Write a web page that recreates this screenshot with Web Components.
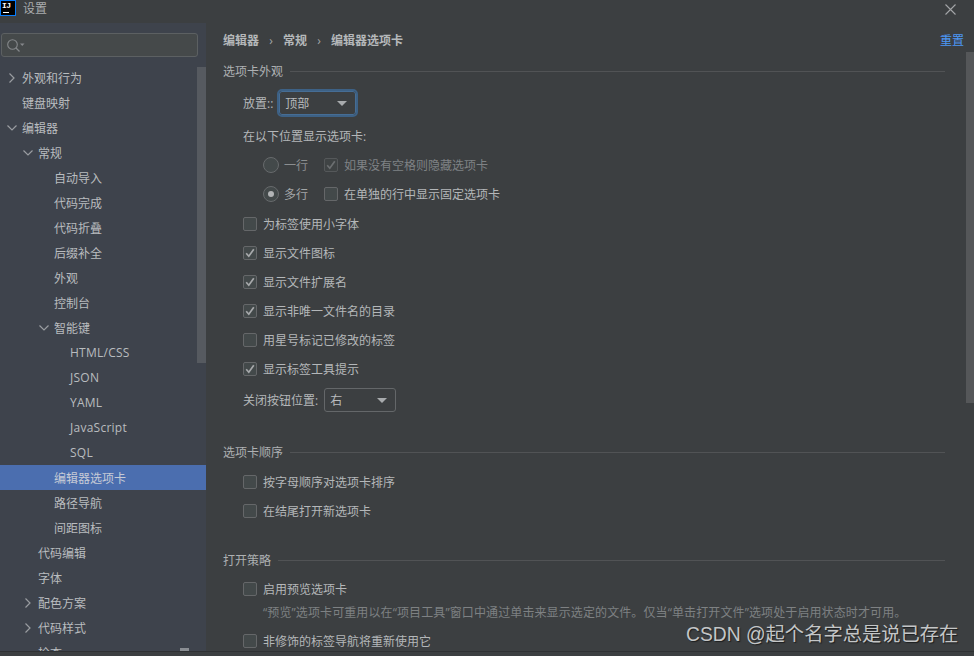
<!DOCTYPE html>
<html lang="zh"><head><meta charset="utf-8"><title>设置</title>
<style>
html,body{margin:0;padding:0;background:#3c3f41}
body{width:974px;height:656px;overflow:hidden;font:12px "Open Sans","Noto Sans CJK SC",sans-serif;color:#b4b7b9}
</style></head><body>
<settings-app></settings-app>
<script>
const FONT='"Open Sans","Noto Sans CJK SC",sans-serif';
function def(name,css,html,init){
  customElements.define(name,class extends HTMLElement{
    constructor(){super();const r=this.attachShadow({mode:'open'});r.innerHTML='<style>'+css+'</style>'+(typeof html==='function'?html(this):html);}
    connectedCallback(){if(init)init(this,this.shadowRoot)}
  });
}
const CHEV_R='<svg width="10" height="12" viewBox="0 0 10 12"><path d="M2.5 1.5 7 6 2.5 10.500" fill="none" stroke="#9a9da1" stroke-width="1.200"/></svg>';
const CHEV_D='<svg width="12" height="10" viewBox="0 0 12 10"><path d="M1.500 2.500 6 7l4.500-4.500" fill="none" stroke="#9a9da1" stroke-width="1.200"/></svg>';

def('tree-row',`:host{display:flex;align-items:center;height:25px;flex:none;font-size:12px;color:#b9bcbf;white-space:nowrap;box-sizing:border-box;padding-left:calc(var(--d,0)*16px + 22px);position:relative}
:host([sel]){background:#4b6eaf;color:#c6cbd6}
:host([latin]){letter-spacing:.25px}
.a{position:absolute;left:calc(var(--d,0)*16px + 6px);top:7px;width:12px;height:12px;display:flex;align-items:center;justify-content:center}`,
 h=>{const o=h.getAttribute('open');const ic=o==='1'?CHEV_D:o==='0'?CHEV_R:'';return `<span class="a">${ic}</span><slot></slot>`;},
 h=>{h.style.setProperty('--d',h.getAttribute('d')||0)});

def('search-box',`:host{display:flex;align-items:center;height:24px;box-sizing:border-box;margin:10px 8px 0 1px;width:197px;background:#45494a;border:1px solid #5c6062;border-radius:3px;padding-left:4px}`,
 `<svg width="20" height="15" viewBox="0 0 20 15"><circle cx="6.500" cy="6.500" r="4.800" fill="none" stroke="#85888b" stroke-width="1.100"/><path d="M10 10l3.500 3.500" stroke="#85888b" stroke-width="1.300"/><path d="M14 5.500h4.500L16.250 8z" fill="#85888b"/></svg>`);

def('side-bar',`:host{display:block;width:206px;flex:none;height:100%;background:#3e434c;position:relative;overflow:hidden}
.tree{margin-top:8px;display:flex;flex-direction:column}
.thumb{position:absolute;left:197px;top:44px;width:9px;height:296px;background:#565a60}
.mini{position:absolute;left:180px;top:625px;width:9px;height:3px;background:#8a8e93}`,
 `<search-box></search-box><div class="tree"><slot></slot></div><div class="thumb"></div><div class="mini"></div>`);

def('title-bar',`:host{display:flex;align-items:flex-start;height:23px;flex:none;background:#3c3f41;position:relative;font-size:12px;color:#a9acae}
.logo{width:16px;height:16px;margin:0 7px 0 0;box-sizing:border-box;background:#000;border:1px solid #087cfa;position:relative;flex:none;color:#fff;font:bold 8px/10px "Liberation Mono",monospace;padding-left:1px;letter-spacing:-.5px}
.logo i{position:absolute;left:2px;bottom:2px;width:6px;height:1px;background:#fff}
.t{line-height:18px}
.x{margin:4px 18px 0 auto;display:flex}`,
 `<div class="logo">IJ<i></i></div><span class="t"><slot></slot></span><span class="x"><svg width="11" height="11" viewBox="0 0 11 11"><path d="M.5.500l10 10M10.500.500l-10 10" stroke="#a4a6a8" stroke-width="1.100"/></svg></span>`);

def('bread-crumbs',`:host{display:flex;flex:none;align-items:center;height:20px;margin:7px 10px 0 17px;font-size:12px;font-weight:700;color:#b5b8ba}
::slotted(span){display:inline-block}
::slotted(.sep){width:24px;text-align:center;font-weight:400;color:#a2a5a7}
::slotted(a){margin-left:auto;color:#4c97f5;font-weight:400}`,`<slot></slot>`);

def('group-title',`:host{display:flex;flex:none;align-items:center;height:20px;margin-left:17px;margin-right:29px;font-size:12px;color:#adb0b2;white-space:nowrap}
i{flex:1;height:1px;background:#515355;margin-left:7px}`,`<slot></slot><i></i>`);

def('check-box',`:host{display:flex;flex:none;align-items:center;height:29px;padding-left:37px;font-size:12px;color:#b4b7b9;white-space:nowrap}
:host([sub]){height:auto;padding:0}
:host([dim]){color:#7f8285}
b{width:14px;height:14px;box-sizing:border-box;border:1px solid #656769;border-radius:2px;background:#43494a;margin-right:6px;display:flex;align-items:center;justify-content:center;flex:none}
svg{display:none}
:host([on]) svg{display:block}
:host([dim]) path{stroke:#6c6f71}
:host([dim]) b{border-color:#55585a;background:#3f4344}`,
 `<b><svg width="12" height="12" viewBox="0 0 12 12"><path d="M2.200 6.300 4.800 9.200 9.800 2.200" fill="none" stroke="#a7a9ab" stroke-width="1.700"/></svg></b><slot></slot>`);

def('radio-btn',`:host{display:flex;align-items:center;font-size:12px;color:#a3a6a8;white-space:nowrap;width:61px;flex:none}
b{width:16px;height:16px;box-sizing:border-box;border:1px solid #676a6c;border-radius:50%;background:#43494a;margin-right:5px;display:flex;align-items:center;justify-content:center}
:host([dim]){color:#8b8e90}
i{display:none;width:6px;height:6px;border-radius:50%;background:#b2b4b6}
:host([on]) i{display:block}`,`<b><i></i></b><slot></slot>`);

def('combo-box',`:host{display:flex;align-items:center;box-sizing:border-box;height:24px;border:1px solid #646769;border-radius:3px;background:#3c3f41;padding:0 8px 0 5px;font-size:12px;color:#b9bcbe;width:var(--w,72px);flex:none}
:host([focus]){outline:2px solid #3d6185;outline-offset:0;border-color:#466d94}
i{margin-left:auto;width:0;height:0;border-left:5px solid transparent;border-right:5px solid transparent;border-top:5px solid #a8abad}`,`<slot></slot><i></i>`);

def('form-row',`:host{display:flex;flex:none;align-items:center;padding-left:37px;font-size:12px;color:#b4b7b9;white-space:nowrap;gap:6px}`,`<slot></slot>`);

def('sub-row',`:host{display:flex;flex:none;align-items:center;height:29px;padding-left:57px;font-size:12px}`,`<slot></slot>`);

def('main-panel',`:host{display:flex;flex-direction:column;flex:1;min-width:0;height:100%;background:#3c3f41;position:relative;overflow:hidden}
.bar{position:absolute;right:0;top:29px;width:8px;height:351px;background:#555759}`,`<slot></slot><div class="bar"></div>`);

def('water-mark',`:host{position:absolute;left:686px;top:621px;font:19.300px/27px "Liberation Sans","Noto Sans CJK SC",sans-serif;color:#c4c6c7;text-shadow:1px 1px 1px #1d1e1f;white-space:nowrap}`,`<slot></slot>`);

def('settings-app',`:host{display:flex;flex-direction:column;width:974px;height:656px;position:relative;overflow:hidden;font-family:${FONT}}
.body{display:flex;height:628px;flex:none}
.foot{flex:1;background:#3c3f41;border-top:1px solid #2f3133}`,
`<title-bar>设置</title-bar>
<div class="body">
<side-bar>
<tree-row open="0">外观和行为</tree-row>
<tree-row>键盘映射</tree-row>
<tree-row open="1">编辑器</tree-row>
<tree-row d="1" open="1">常规</tree-row>
<tree-row d="2">自动导入</tree-row>
<tree-row d="2">代码完成</tree-row>
<tree-row d="2">代码折叠</tree-row>
<tree-row d="2">后缀补全</tree-row>
<tree-row d="2">外观</tree-row>
<tree-row d="2">控制台</tree-row>
<tree-row d="2" open="1">智能键</tree-row>
<tree-row d="3" latin>HTML/CSS</tree-row>
<tree-row d="3" latin>JSON</tree-row>
<tree-row d="3" latin>YAML</tree-row>
<tree-row d="3" latin>JavaScript</tree-row>
<tree-row d="3" latin>SQL</tree-row>
<tree-row d="2" sel>编辑器选项卡</tree-row>
<tree-row d="2">路径导航</tree-row>
<tree-row d="2">间距图标</tree-row>
<tree-row d="1">代码编辑</tree-row>
<tree-row d="1">字体</tree-row>
<tree-row d="1" open="0">配色方案</tree-row>
<tree-row d="1" open="0">代码样式</tree-row>
<tree-row d="1">检查</tree-row>
</side-bar>
<main-panel>
<bread-crumbs><span>编辑器</span><span class="sep">›</span><span>常规</span><span class="sep">›</span><span>编辑器选项卡</span><a>重置</a></bread-crumbs>
<group-title style="margin-top:11px">选项卡外观</group-title>
<form-row style="height:26px;margin-top:9px"><span>放置::</span><combo-box focus style="--w:77px">顶部</combo-box></form-row>
<form-row style="height:20px;margin-top:10px">在以下位置显示选项卡:</form-row>
<sub-row style="margin-top:4px"><radio-btn dim>一行</radio-btn><check-box sub on dim>如果没有空格则隐藏选项卡</check-box></sub-row>
<sub-row><radio-btn on>多行</radio-btn><check-box sub>在单独的行中显示固定选项卡</check-box></sub-row>
<check-box style="margin-top:1px">为标签使用小字体</check-box>
<check-box on>显示文件图标</check-box>
<check-box on>显示文件扩展名</check-box>
<check-box on>显示非唯一文件名的目录</check-box>
<check-box>用星号标记已修改的标签</check-box>
<check-box on>显示标签工具提示</check-box>
<form-row style="height:24px;margin-top:5px"><span>关闭按钮位置:</span><combo-box style="--w:72px">右</combo-box></form-row>
<group-title style="margin-top:30px">选项卡顺序</group-title>
<check-box style="margin-top:5px">按字母顺序对选项卡排序</check-box>
<check-box>在结尾打开新选项卡</check-box>
<group-title style="margin-top:25px">打开策略</group-title>
<check-box style="margin-top:4px">启用预览选项卡</check-box>
<form-row style="padding-left:57px;height:17px;color:#7e8183;letter-spacing:.11px">“预览”选项卡可重用以在“项目工具”窗口中通过单击来显示选定的文件。仅当“单击打开文件”选项处于启用状态时才可用。</form-row>
<check-box style="margin-top:6px">非修饰的标签导航将重新使用它</check-box>
</main-panel>
</div>
<div class="foot"></div>
<water-mark>CSDN @起个名字总是说已存在</water-mark>`);
</script>
</body></html>
